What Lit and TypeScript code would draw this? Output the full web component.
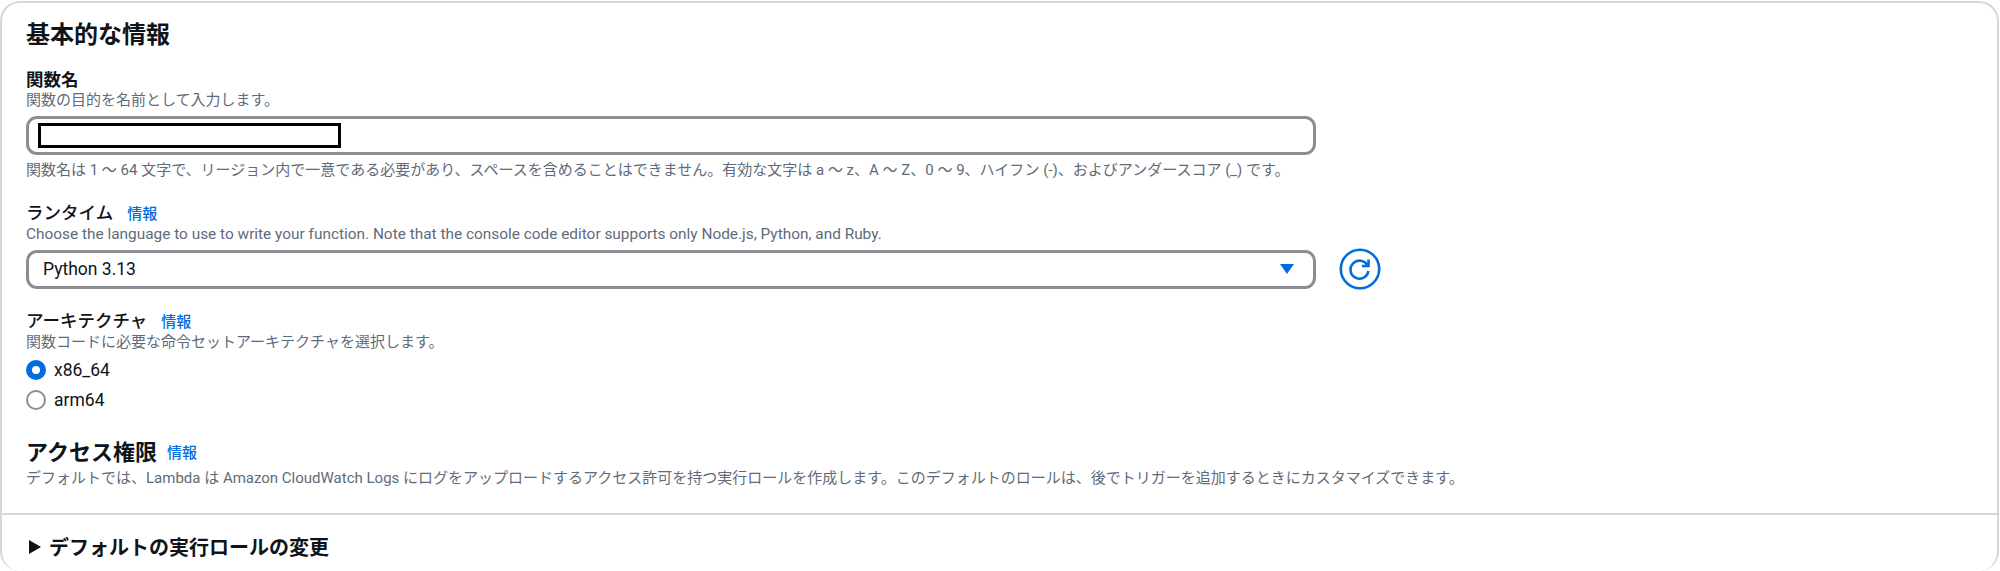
import { LitElement, html, css } from 'lit';
import { customElement } from 'lit/decorators.js';

@customElement('app-root')
export class AppRoot extends LitElement {
  static styles = css`
    :host {
      display: block;
      font-family: 'Roboto', 'Noto Sans CJK JP', sans-serif;
      color: #0f141a;
    }

    .card {
      box-sizing: border-box;
      height: 570px;
      width: 1999px;
      border: 2px solid #d5d7dc;
      border-bottom: none;
      border-radius: 20px;
      margin-top: 1px;
      overflow: hidden;
    }

    .body {
      padding: 17px 24px 0 24px;
      height: 512px;
      box-sizing: border-box;
      border-bottom: 2px solid #d5d7dc;
    }

    h2 {
      margin: 0;
      font-size: 24px;
      line-height: 30px;
      font-weight: 700;
    }

    .label {
      font-size: 17.5px;
      line-height: 21px;
      font-weight: 700;
      margin-top: 20px;
    }

    .label.plain {
      font-weight: 500;
      margin-top: 0;
    }

    .desc {
      font-size: 15px;
      line-height: 18px;
      color: #5f6b7a;
    }

    .desc.latin {
      font-size: 15.4px;
    }

    .link {
      color: #006ce0;
      font-size: 15px;
      font-weight: 500;
      margin-left: 14px;
    }

    .row {
      display: flex;
      align-items: center;
      gap: 23px;
      margin-top: 5px;
    }

    .control {
      box-sizing: border-box;
      width: 1290px;
      height: 39px;
      border: 3px solid #8c8c94;
      border-radius: 11px;
      display: flex;
      align-items: center;
      justify-content: space-between;
    }

    .input {
      margin-top: 7px;
      padding: 0 9px;
    }

    .redact {
      box-sizing: border-box;
      width: 303px;
      height: 25px;
      border: 3px solid #000;
    }

    .hint {
      margin-top: 6px;
    }

    .section {
      margin-top: 24px;
    }

    .section.arch {
      margin-top: 21px;
    }

    .select {
      padding: 0 19px 0 14px;
      font-size: 17.5px;
    }

    .caret {
      width: 0;
      height: 0;
      border-left: 7px solid transparent;
      border-right: 7px solid transparent;
      border-top: 10px solid #006ce0;
    }

    .refresh {
      display: block;
      width: 42px;
      height: 42px;
    }

    .radio {
      display: flex;
      align-items: center;
      gap: 8px;
      font-size: 17.5px;
      line-height: 20px;
      margin-top: 10px;
    }

    .radios {
      margin-top: -1px;
    }

    .dot {
      box-sizing: border-box;
      width: 20px;
      height: 20px;
      border-radius: 50%;
      border: 2px solid #8c8c94;
    }

    .dot.on {
      border: 6px solid #006ce0;
    }

    h3 {
      margin: 0 0 2px 0;
      font-size: 22px;
      line-height: 28px;
      font-weight: 700;
      display: flex;
      align-items: center;
    }

    h3 .link {
      margin-left: 10px;
    }

    .access {
      margin-top: 29px;
    }

    .expander {
      box-sizing: border-box;
      display: flex;
      align-items: center;
      gap: 8px;
      padding: 7px 26px 0 27px;
      height: 56px;
      font-size: 20px;
      font-weight: 700;
    }

    .tri {
      width: 0;
      height: 0;
      border-top: 7px solid transparent;
      border-bottom: 7px solid transparent;
      border-left: 12px solid #0f141a;
    }
  `;

  render() {
    return html`
      <div class="card">
        <div class="body">
          <h2>基本的な情報</h2>

          <div class="label">関数名</div>
          <div class="desc">関数の目的を名前として入力します。</div>
          <div class="control input"><div class="redact"></div></div>
          <div class="desc hint">
            関数名は 1 ～ 64 文字で、リージョン内で一意である必要があり、スペースを含めることはできません。有効な文字は a ～ z、A ～ Z、0 ～ 9、ハイフン (-)、およびアンダースコア (_) です。
          </div>

          <div class="section">
            <div class="label plain">ランタイム<span class="link">情報</span></div>
            <div class="desc latin">
              Choose the language to use to write your function. Note that the console code editor supports only Node.js, Python, and Ruby.
            </div>
            <div class="row">
              <div class="control select">
                <span>Python 3.13</span>
                <span class="caret"></span>
              </div>
              <svg class="refresh" viewBox="0 0 42 42" fill="none" stroke="#006ce0" stroke-width="2.6">
                <circle cx="21" cy="21" r="19.2"></circle>
                <path d="M28.5 17.5a9 9 0 1 0 .9 5.5"></path>
                <path d="M29.5 11.5v6.5h-6.5"></path>
              </svg>
            </div>
          </div>

          <div class="section arch">
            <div class="label plain">アーキテクチャ<span class="link">情報</span></div>
            <div class="desc">関数コードに必要な命令セットアーキテクチャを選択します。</div>
            <div class="radios">
              <div class="radio"><span class="dot on"></span>x86_64</div>
              <div class="radio"><span class="dot"></span>arm64</div>
            </div>
          </div>

          <div class="access">
            <h3>アクセス権限<span class="link">情報</span></h3>
            <div class="desc">
              デフォルトでは、Lambda は Amazon CloudWatch Logs にログをアップロードするアクセス許可を持つ実行ロールを作成します。このデフォルトのロールは、後でトリガーを追加するときにカスタマイズできます。
            </div>
          </div>
        </div>

        <div class="expander"><span class="tri"></span>デフォルトの実行ロールの変更</div>
      </div>
    `;
  }
}
